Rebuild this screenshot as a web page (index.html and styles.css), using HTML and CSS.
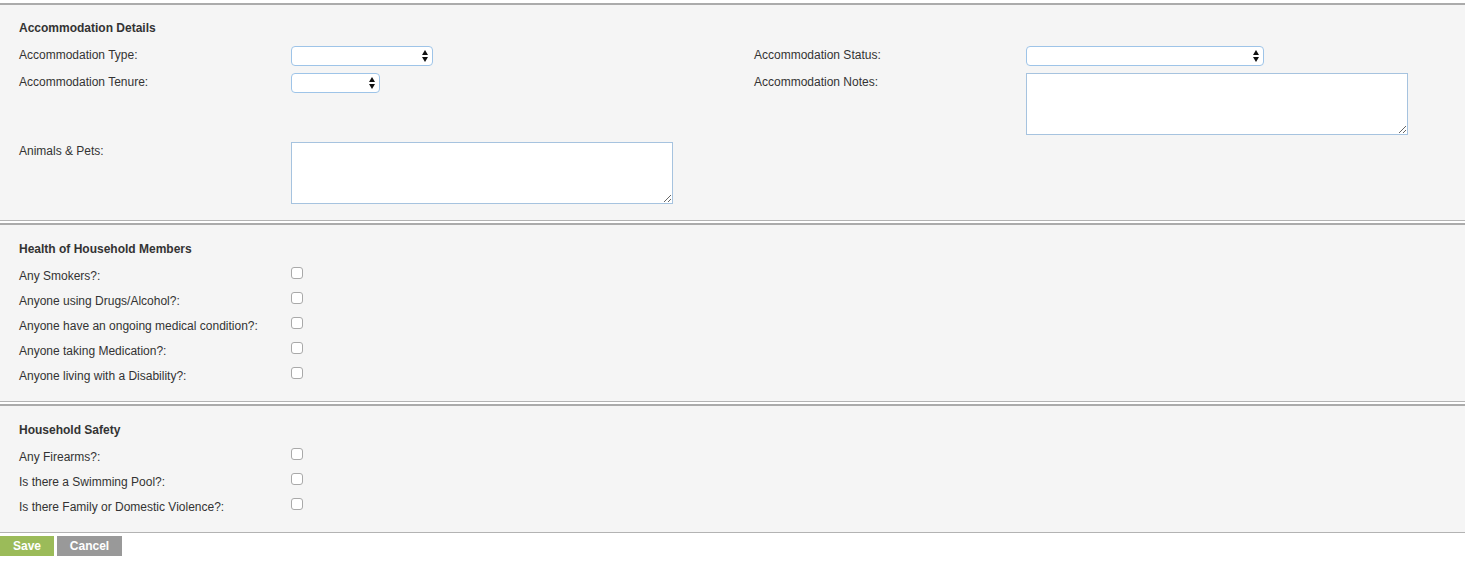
FILE: index.html
```html
<!DOCTYPE html>
<html lang="en">
<head>
    <meta charset="UTF-8">
    <title>Household Details</title>
    <link rel="stylesheet" href="styles.css">
</head>
<body>
    <form id="householdForm">
        <div class="section first">
            <h3>Accommodation Details</h3>
            <div class="grid">
                <label>Accommodation Type:</label>
                <div class="select-wrap w142"><select></select><span class="arrows"></span></div>
                <label>Accommodation Status:</label>
                <div class="select-wrap w238"><select></select><span class="arrows"></span></div>

                <label>Accommodation Tenure:</label>
                <div class="select-wrap w89"><select></select><span class="arrows"></span></div>
                <label>Accommodation Notes:</label>
                <textarea class="notes wide"></textarea>

                <label>Animals &amp; Pets:</label>
                <textarea class="notes"></textarea>
            </div>
        </div>

        <div class="section">
            <h3>Health of Household Members</h3>
            <div class="checks">
                <label>Any Smokers?:</label><input type="checkbox">
                <label>Anyone using Drugs/Alcohol?:</label><input type="checkbox">
                <label>Anyone have an ongoing medical condition?:</label><input type="checkbox">
                <label>Anyone taking Medication?:</label><input type="checkbox">
                <label>Anyone living with a Disability?:</label><input type="checkbox">
            </div>
        </div>

        <div class="section">
            <h3>Household Safety</h3>
            <div class="checks">
                <label>Any Firearms?:</label><input type="checkbox">
                <label>Is there a Swimming Pool?:</label><input type="checkbox">
                <label>Is there Family or Domestic Violence?:</label><input type="checkbox">
            </div>
        </div>

        <div class="buttons">
            <button type="submit" class="btn save">Save</button>
            <button type="button" class="btn cancel">Cancel</button>
        </div>
    </form>
</body>
</html>
```

FILE: styles.css
```css
body { margin: 0; font-family: "Liberation Sans", Arial, sans-serif; font-size: 12px; color: #333; background: #fff; }
.section { margin-top: 2px; background: #f5f5f5; border-top: 2px solid #ababab; border-bottom: 1px solid #b3b3b3; padding: 16px 19px 16px; }
.section.first { margin-top: 3px; padding-top: 15px; }
.section h3 { margin: 0 0 10px; font-size: 12px; line-height: 16px; font-weight: bold; color: #333; }
label { line-height: 18px; color: #333; }
.grid { display: grid; grid-template-columns: 272px 463px 272px 1fr; row-gap: 7px; align-items: start; }
.checks { display: grid; grid-template-columns: 272px 1fr; row-gap: 7px; }
.select-wrap { position: relative; height: 20px; }
.select-wrap select { appearance: none; -webkit-appearance: none; width: 100%; height: 20px; margin: 0; background: #fff; border: 1px solid #9ec4e8; border-radius: 4px; box-sizing: border-box; font: inherit; }
.select-wrap .arrows { position: absolute; right: 5px; top: 4px; width: 0; height: 0; pointer-events: none; }
.select-wrap .arrows::before, .select-wrap .arrows::after { content: ""; position: absolute; right: 0; border-left: 3px solid transparent; border-right: 3px solid transparent; }
.select-wrap .arrows::before { top: 0; border-bottom: 5px solid #111; }
.select-wrap .arrows::after { top: 7px; border-top: 5px solid #111; }
.w142 { width: 142px; }
.w89 { width: 89px; }
.w238 { width: 238px; }
.notes { display: block; width: 382px; height: 62px; margin: 0; box-sizing: border-box; border: 1px solid #a6c3df; background: #fff; font: inherit; }
input[type=checkbox] { appearance: none; -webkit-appearance: none; width: 12px; height: 12px; margin: 0; border: 1px solid #a9a9a9; border-radius: 3px; background: #fff; box-sizing: border-box; }
.buttons { display: flex; gap: 3px; margin-top: 3px; }
.btn { border: none; height: 20px; margin: 0; color: #fff; font: bold 12px "Liberation Sans", Arial, sans-serif; padding: 0; cursor: pointer; }
.save { background: #9bbb59; width: 54px; }
.cancel { background: #999; width: 65px; }
```
